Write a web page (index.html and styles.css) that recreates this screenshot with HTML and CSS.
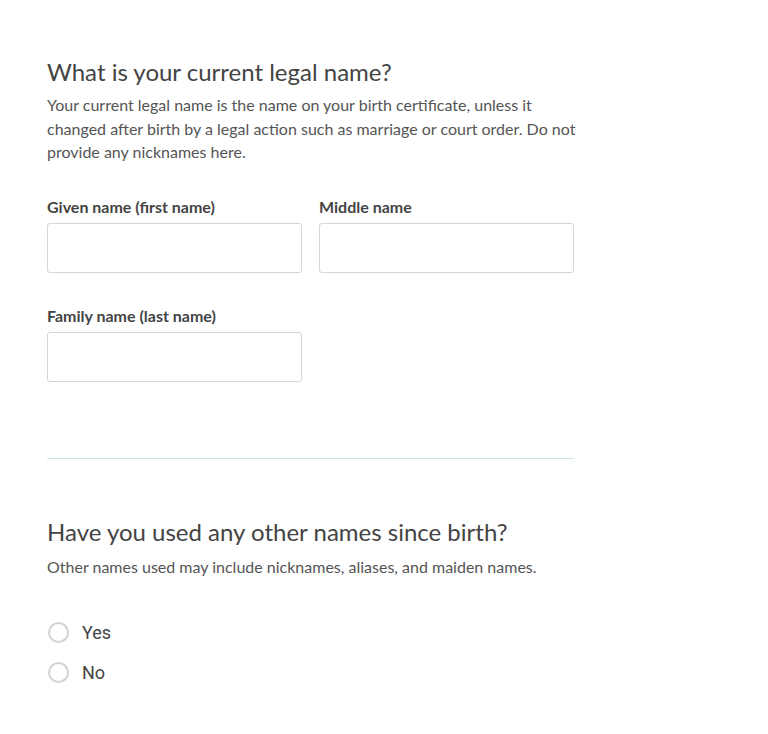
FILE: index.html
```html
<!DOCTYPE html>
<html lang="en">
<head>
  <meta charset="UTF-8">
  <meta name="viewport" content="width=device-width, initial-scale=1.0">
  <title>Legal name</title>
  <link rel="stylesheet" href="styles.css">
</head>
<body>
  <div class="page">
    <section class="question">
      <h2 class="question-title">What is your current legal name?</h2>
      <p class="question-help">Your current legal name is the name on your birth certificate, unless it changed after birth by a legal action such as marriage or court order. Do not provide any nicknames here.</p>

      <div class="field-row">
        <div class="field">
          <label class="field-label" for="given">Given name (first name)</label>
          <input class="field-input" id="given" type="text">
        </div>
        <div class="field">
          <label class="field-label" for="middle">Middle name</label>
          <input class="field-input" id="middle" type="text">
        </div>
      </div>

      <div class="field-row">
        <div class="field">
          <label class="field-label" for="family">Family name (last name)</label>
          <input class="field-input" id="family" type="text">
        </div>
      </div>
    </section>

    <hr class="divider">

    <section class="question">
      <h2 class="question-title">Have you used any other names since birth?</h2>
      <p class="question-help">Other names used may include nicknames, aliases, and maiden names.</p>

      <div class="radio-group">
        <label class="radio">
          <input type="radio" name="other-names" value="yes">
          <span class="radio-mark"></span>
          <span class="radio-text">Yes</span>
        </label>
        <label class="radio">
          <input type="radio" name="other-names" value="no">
          <span class="radio-mark"></span>
          <span class="radio-text">No</span>
        </label>
      </div>
    </section>
  </div>
</body>
</html>
```

FILE: styles.css
```css
* {
  margin: 0;
  padding: 0;
  box-sizing: border-box;
}

body {
  background: #fff;
  color: #555;
  font-family: 'Lato', 'Liberation Sans', sans-serif;
}

.page {
  width: 527px;
  margin-left: 47px;
  padding-top: 57px;
}

.question-title {
  font-size: 24px;
  font-weight: 400;
  line-height: 30px;
  color: #444;
}

.question-help {
  margin-top: 6px;
  margin-right: -12px;
  font-size: 16px;
  line-height: 23.5px;
  color: #555;
}

.field-row {
  display: flex;
  gap: 17px;
  margin-top: 33px;
}

.field-row + .field-row {
  margin-top: 33px;
}

.field {
  width: 255px;
  display: flex;
  flex-direction: column;
}

.field-label {
  font-size: 16px;
  font-weight: 700;
  line-height: 20px;
  color: #444;
  margin-bottom: 6px;
}

.field-input {
  height: 50px;
  border: 1px solid #d6d6d6;
  border-radius: 3px;
  background: #fff;
}

.divider {
  border: none;
  border-top: 1px solid #c9e6e6;
  margin: 76px 0 0;
}

.divider + .question {
  margin-top: 58px;
}

.divider + .question .question-help {
  margin-top: 8px;
}

.radio-group {
  margin-top: 42px;
  display: flex;
  flex-direction: column;
  gap: 16px;
}

.radio {
  display: flex;
  align-items: center;
  height: 24px;
  cursor: pointer;
}

.radio input {
  display: none;
}

.radio-mark {
  width: 21px;
  height: 21px;
  border: 2px solid #d2d2d2;
  border-radius: 50%;
  margin-left: 1px;
}

.radio-text {
  margin-left: 13px;
  font-family: 'Roboto', 'Liberation Sans', sans-serif;
  font-size: 18px;
  color: #444;
}
```
